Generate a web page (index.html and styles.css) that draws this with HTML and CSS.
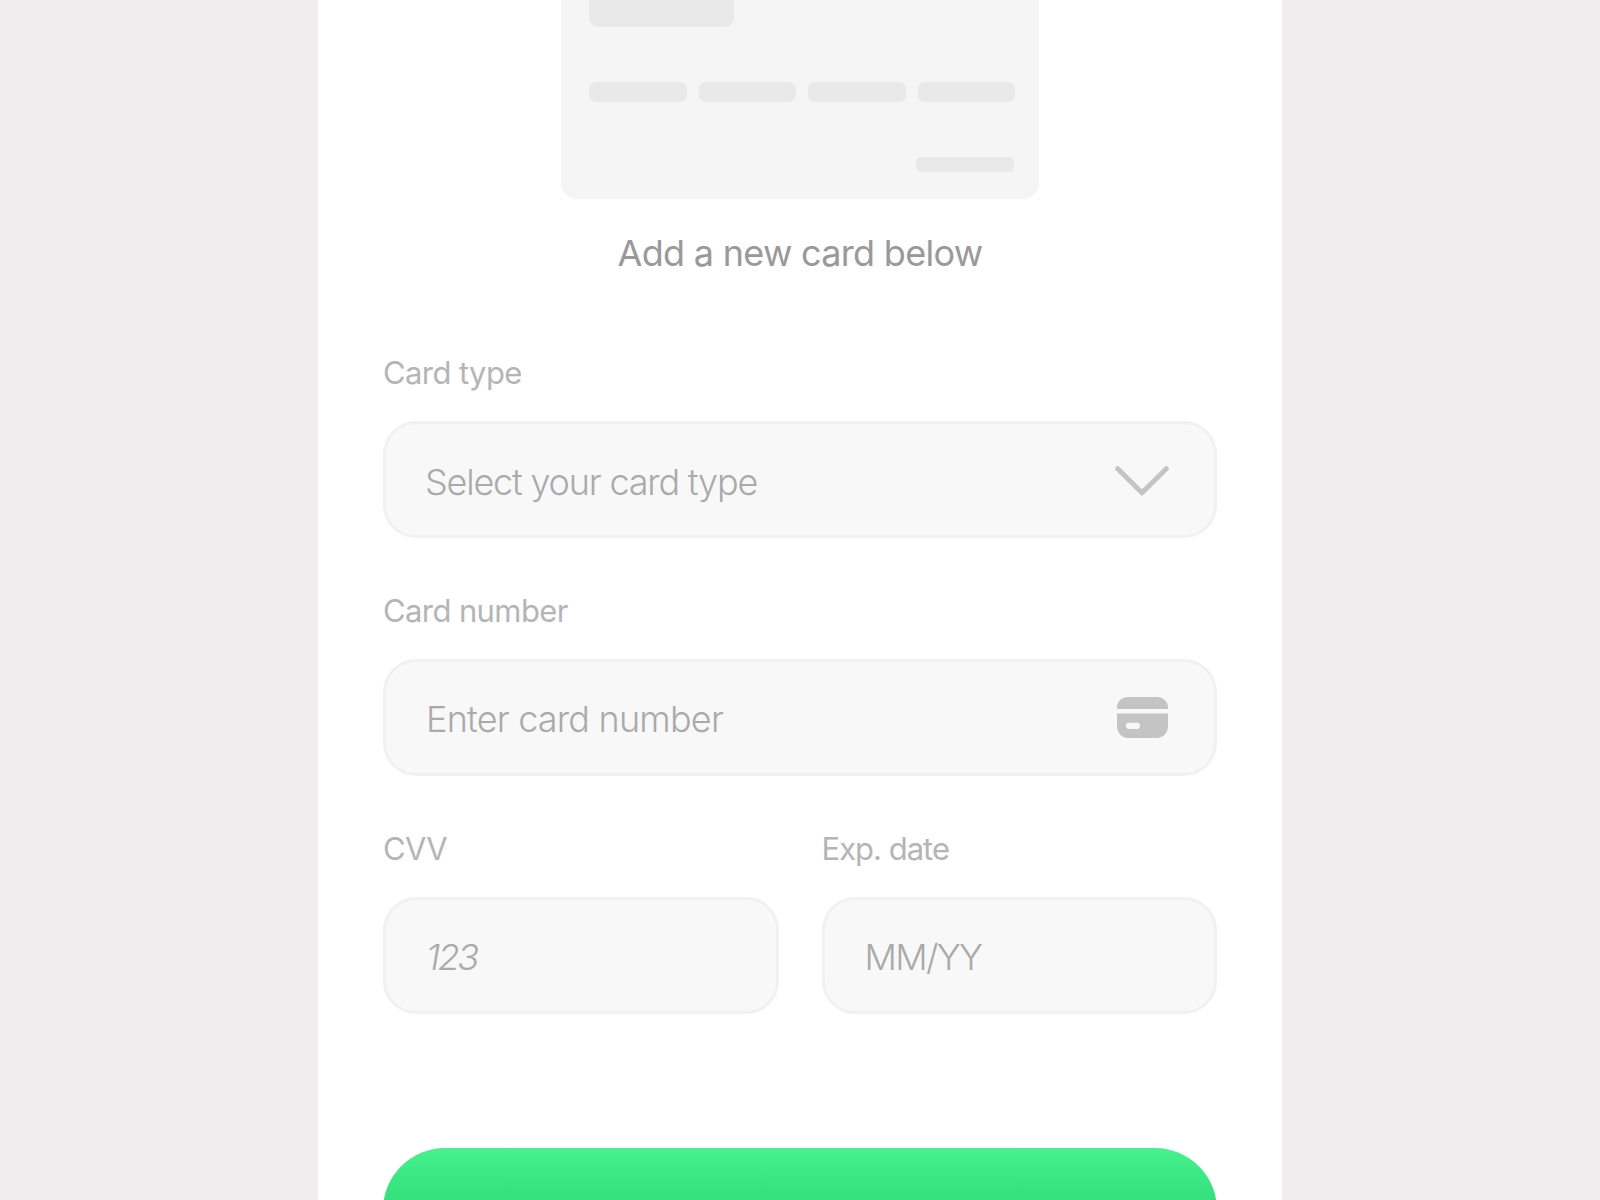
FILE: index.html
```html
<!DOCTYPE html>
<html lang="en">
<head>
<meta charset="utf-8">
<title>Add a new card</title>
<link rel="stylesheet" href="styles.css">
</head>
<body>
<main class="panel">
  <div class="card-art">
    <div class="chip"></div>
    <div class="digits"><span></span><span></span><span></span><span></span></div>
    <div class="expiry"></div>
  </div>
  <p class="lead">Add a new card below</p>
  <form class="form">
    <div class="group">
      <div class="label">Card type</div>
      <div class="field"><span class="ph ph-select">Select your card type</span>
        <svg class="chev" width="54" height="30" viewBox="0 0 54 30"><path d="M2.700 2.700 L27 26.800 L51.300 2.700" fill="none" stroke="#c4c4c4" stroke-width="5" stroke-linecap="round" stroke-linejoin="round"/></svg>
      </div>
    </div>
    <div class="group">
      <div class="label">Card number</div>
      <div class="field"><span class="ph ph-number">Enter card number</span>
        <svg class="card-icon" width="51" height="41" viewBox="0 0 51 41"><path fill="#c4c4c4" d="M11 0H40C46 0 51 4.500 51 10.500V12H0V10.500C0 4.500 5 0 11 0ZM0 16.500H51V29C51 36 46 41 40 41H11C5 41 0 36 0 29ZM12 25.800C10 25.800 9 27 9 28.800C9 30.600 10 32 12 32H20C22 32 23 30.600 23 28.800C23 27 22 25.800 20 25.800Z" fill-rule="evenodd"/></svg>
      </div>
    </div>
    <div class="pair">
      <div class="group">
        <div class="label">CVV</div>
        <div class="field"><span class="ph ph-num">123</span></div>
      </div>
      <div class="group">
        <div class="label label-exp">Exp. date</div>
        <div class="field"><span class="ph ph-date">MM/YY</span></div>
      </div>
    </div>
  </form>
  <button class="cta" type="button" aria-label="Continue"></button>
</main>
</body>
</html>
```
FILE: styles.css
```css
* { box-sizing: border-box; }
html, body { margin: 0; height: 1200px; overflow: hidden; }
body { background: #efeded; font-family: Inter, "Liberation Sans", sans-serif; }
.panel {
  width: 964px; height: 1200px; margin: 0 auto; background: #fff;
  padding: 0 65px; overflow: hidden;
  display: flex; flex-direction: column;
}
.card-art {
  width: 478px; height: 199px; margin: 0 auto; flex: none;
  background: #f5f5f5; border-radius: 0 0 16px 16px;
  padding: 0 24px 27px 28px;
  display: flex; flex-direction: column;
}
.chip { width: 145px; height: 27px; background: #e9e9e9; border-radius: 0 0 9px 9px; }
.digits { display: flex; gap: 12px; margin-top: 55px; }
.digits span { width: 97.500px; height: 20px; background: #e9e9e9; border-radius: 7px; }
.expiry { width: 98px; height: 15px; margin: auto 1px 0 auto; background: #e9e9e9; border-radius: 5px; }
.lead {
  margin: 32px 0 0; text-align: center; color: #999;
  font-size: 36px; line-height: 44px; letter-spacing: -0.7px; font-weight: 400;
}
.form { margin-top: 78px; display: flex; flex-direction: column; gap: 53px; }
.group { display: flex; flex-direction: column; gap: 28px; min-width: 0; }
.pair { display: grid; grid-template-columns: 1fr 1fr; gap: 43px; }
.label { color: #b5b5b5; font-size: 31px; line-height: 40px; letter-spacing: -0.6px; }
.label-exp { letter-spacing: -1px; }
.field {
  height: 117px; background: #f8f8f8; border: 3px solid #f1f1f1; border-radius: 33px;
  padding: 3px 45px 0 40px;
  display: flex; align-items: center; justify-content: space-between;
}
.ph { color: #aaa; font-size: 36px; line-height: 44px; font-weight: 300; letter-spacing: -0.8px; }
.ph-select { letter-spacing: -1.2px; margin: 1px 0 0 -1px; }
.ph-date { letter-spacing: -1.7px; }
.ph-num { font-style: italic; letter-spacing: -2.5px; }
.chev { margin-top: -1px; }
.card-icon { margin: -3px 1px 0 0; }
.cta {
  display: block; flex: none; width: 834px; height: 130px; margin-top: 134px; padding: 0;
  border: 0; border-radius: 62px;
  background: linear-gradient(#46f18e, #33e07b 52px);
}
```
